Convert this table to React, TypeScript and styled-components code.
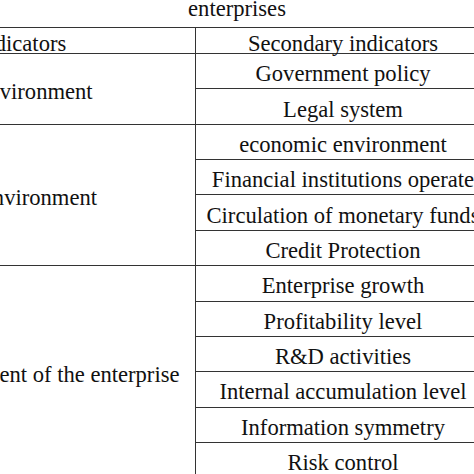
import styled, { createGlobalStyle } from "styled-components";

const GlobalStyle = createGlobalStyle`
  html, body {
    margin: 0;
    padding: 0;
    background: #fff;
  }
  body {
    font-family: "Liberation Serif", "Times New Roman", serif;
    font-kerning: none;
    color: #111;
  }
`;

const groups = [
  {
    name: "Regulatory environment",
    items: ["Government policy", "Legal system"],
  },
  {
    name: "Institutional environment",
    items: [
      "economic environment",
      "Financial institutions operate",
      "Circulation of monetary funds",
      "Credit Protection",
    ],
  },
  {
    name: "Development environment of the enterprise",
    items: [
      "Enterprise growth",
      "Profitability level",
      "R&D activities",
      "Internal accumulation level",
      "Information symmetry",
      "Risk control",
    ],
  },
];

const App = () => {
  return (
    <Page>
      <GlobalStyle />
      <Caption>enterprises</Caption>
      <Table>
        <Cell $column={1}>Primary indicators</Cell>
        <Cell $column={2}>Secondary indicators</Cell>
        {groups.map((group) => (
          <>
            <Cell key={group.name} $column={1} $span={group.items.length}>
              {group.name}
            </Cell>
            {group.items.map((item) => (
              <Cell key={item} $column={2}>
                {item}
              </Cell>
            ))}
          </>
        ))}
      </Table>
    </Page>
  );
};

export default App;

const Page = styled.div`
  width: 474px;
  height: 474px;
  overflow: hidden;
  background: #fff;
`;

const Caption = styled.div`
  text-align: center;
  font-size: 22.6px;
  line-height: 17px;
  padding-bottom: 10px;
`;

const Table = styled.div`
  display: grid;
  grid-template-columns: 426px 294px;
  grid-template-rows: 26px repeat(12, 35.36px);
  width: max-content;
  margin-left: -230px;
  border-top: 1px solid #333;
  font-size: 22.6px;
`;

const Cell = styled.div<{ $column: number; $span?: number }>`
  display: flex;
  align-items: center;
  justify-content: center;
  box-sizing: border-box;
  padding-top: 6px;
  grid-column: ${(p) => p.$column};
  grid-row: span ${(p) => p.$span ?? 1};
  border-bottom: 1px solid #333;
  border-right: ${(p) => (p.$column === 1 ? "1px solid #333" : "none")};
  white-space: nowrap;
  line-height: 1.15;
`;
